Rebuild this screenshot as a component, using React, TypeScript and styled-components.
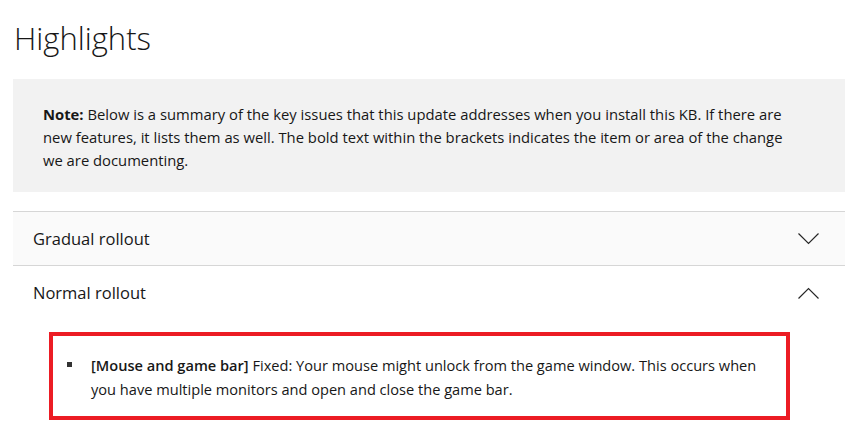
import styled, { createGlobalStyle } from "styled-components";

const GlobalStyle = createGlobalStyle`
	body {
		margin: 0;
		background: #ffffff;
		font-family: "Open Sans", "Noto Sans", Arial, sans-serif;
		color: #171717;
	}
`;

const Chevron = ({ up }: { up?: boolean }) => (
	<svg width="21" height="12" viewBox="0 0 21 12" fill="none">
		<polyline
			points={up ? "0.5,11.5 10.5,1.5 20.5,11.5" : "0.5,0.5 10.5,10.5 20.5,0.5"}
			stroke="#262626"
			strokeWidth="1.2"
		/>
	</svg>
);

const App = () => {
	return (
		<>
			<GlobalStyle />
			<Page>
				<Title>Highlights</Title>
				<NoteBox>
					<NoteText>
						<strong>Note:</strong> Below is a summary of the key issues that this
						update addresses when you install this KB. If there are new features,
						it lists them as well. The bold text within the brackets indicates the
						item or area of the change we are documenting.
					</NoteText>
				</NoteBox>
				<Accordion>
					<Item>
						<Header shaded>
							<HeaderText>Gradual rollout</HeaderText>
							<Chevron />
						</Header>
					</Item>
					<Item>
						<Header>
							<HeaderText>Normal rollout</HeaderText>
							<Chevron up />
						</Header>
						<Panel>
							<Highlight>
								<BulletList>
									<BulletItem>
										<Square />
										<span>
											<strong>[Mouse and game bar]</strong> Fixed: Your mouse
											might unlock from the game window. This occurs when you
											have multiple monitors and open and close the game bar.
										</span>
									</BulletItem>
								</BulletList>
							</Highlight>
						</Panel>
					</Item>
				</Accordion>
			</Page>
		</>
	);
};

const Page = styled.div`
	width: 832px;
	padding: 0 0 0 13px;
`;

const Title = styled.h1`
	margin: 0;
	padding: 16px 0 0 1px;
	font-size: 31px;
	font-weight: 300;
	line-height: 44px;
	color: #171717;
`;

const NoteBox = styled.div`
	margin-top: 19px;
	background: #f2f2f2;
	padding: 24px 60px 20px 30px;
`;

const NoteText = styled.p`
	margin: 0;
	font-size: 14.8px;
	line-height: 23px;
	color: #171717;

	& strong {
		font-weight: 700;
	}
`;

const Accordion = styled.div`
	margin-top: 19px;
	border-top: 1px solid #d6d6d6;
`;

const Item = styled.div`
	border-bottom: 1px solid #d6d6d6;

	&:last-child {
		border-bottom: none;
	}
`;

const Header = styled.div<{ shaded?: boolean }>`
	display: flex;
	align-items: center;
	justify-content: space-between;
	height: 53px;
	padding: 0 26px 0 20px;
	background: ${(p) => (p.shaded ? "#fafafa" : "#ffffff")};
`;

const HeaderText = styled.span`
	font-size: 16.5px;
	color: #171717;
`;

const Panel = styled.div`
	padding: 13px 0 0 36px;
`;

const Highlight = styled.div`
	width: 733px;
	border: 4.5px solid #ec1c24;
	padding: 17px 0 15px 0;
`;

const BulletList = styled.ul`
	margin: 0;
	padding: 0 24px 0 14px;
	list-style: none;
	font-size: 14.6px;
	line-height: 24px;
	color: #171717;

	& strong {
		font-weight: 600;
	}
`;

const BulletItem = styled.li`
	display: flex;
	align-items: flex-start;
	gap: 19px;
`;

const Square = styled.span`
	flex: none;
	width: 5px;
	height: 5px;
	margin-top: 9px;
	background: #333333;
`;

export default App;
